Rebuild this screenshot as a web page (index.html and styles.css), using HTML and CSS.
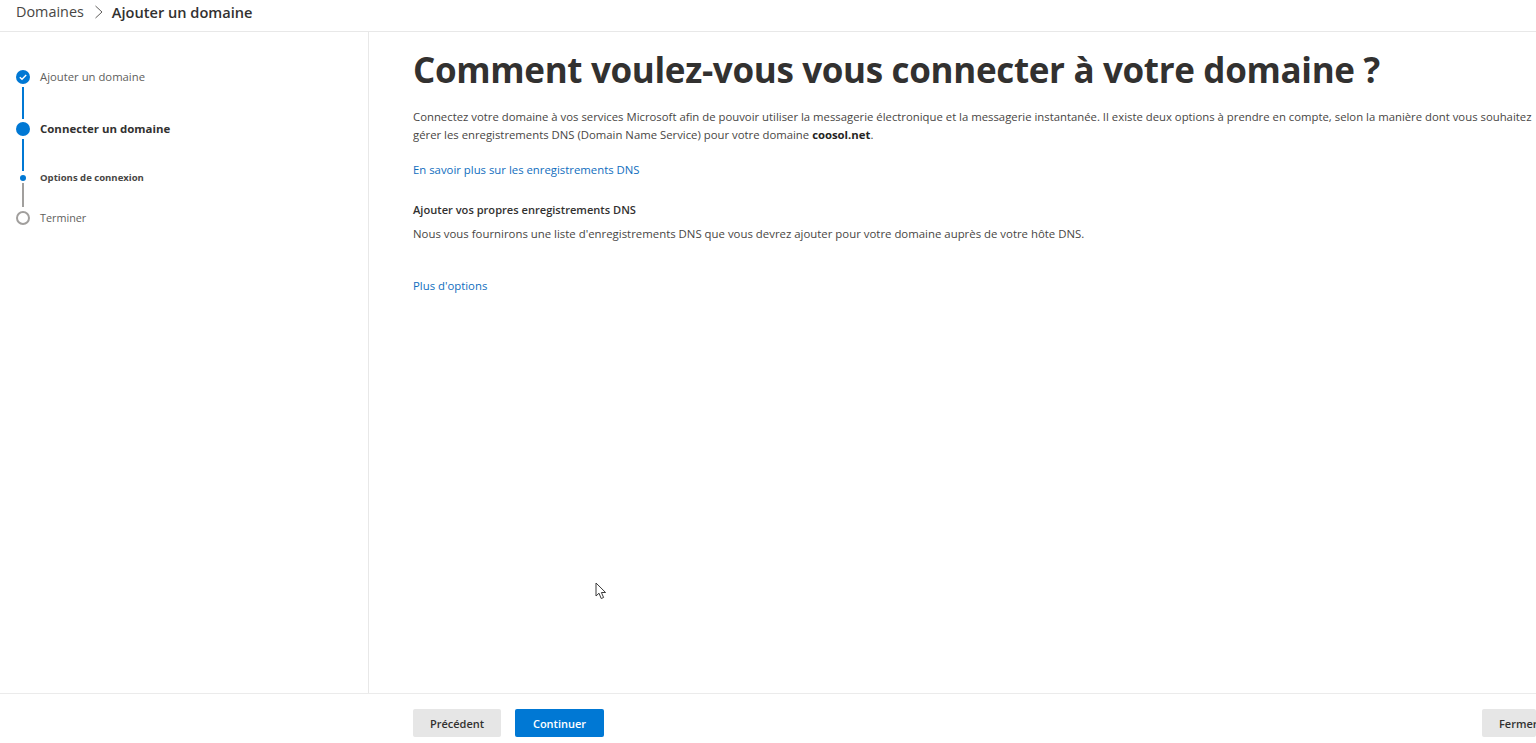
FILE: index.html
```html
<!DOCTYPE html>
<html lang="fr">
<head>
<meta charset="utf-8">
<title>Ajouter un domaine</title>
<link rel="stylesheet" href="styles.css">
</head>
<body>
<div class="page">
  <header class="crumbs">
    <span class="crumb">Domaines</span>
    <svg class="chev" width="10" height="14" viewBox="0 0 10 14"><path d="M1.5 1 L8 7 L1.5 13" fill="none" stroke="#605e5c" stroke-width="1"/></svg>
    <span class="crumb-current">Ajouter un domaine</span>
  </header>
  <div class="middle">
    <nav class="steps">
      <div class="step step-first">
        <div class="rail">
          <svg class="ico" width="14" height="14" viewBox="0 0 14 14"><circle cx="7" cy="7" r="7" fill="#0078d4"/><path d="M3.8 7.2 L6 9.2 L10.2 5" fill="none" stroke="#fff" stroke-width="1.4"/></svg>
          <div class="line line-blue h1"></div>
        </div>
        <span class="label label-main">Ajouter un domaine</span>
      </div>
      <div class="step">
        <div class="rail">
          <div class="dot-big"></div>
          <div class="line line-blue h1"></div>
        </div>
        <span class="label label-strong">Connecter un domaine</span>
      </div>
      <div class="step step-sub">
        <div class="rail">
          <div class="dot-small"></div>
          <div class="line line-grey h2"></div>
        </div>
        <span class="label label-sub">Options de connexion</span>
      </div>
      <div class="step">
        <div class="rail"><div class="ring"></div></div>
        <span class="label label-last">Terminer</span>
      </div>
    </nav>
    <main class="content">
      <h1>Comment voulez-vous vous connecter à votre domaine ?</h1>
      <p class="intro">Connectez votre domaine à vos services Microsoft afin de pouvoir utiliser la messagerie électronique et la messagerie instantanée. Il existe deux options à prendre en compte, selon la manière dont vous souhaitez gérer les enregistrements DNS (Domain Name Service) pour votre domaine <b>coosol.net</b>.</p>
      <a class="link link-learn" href="#">En savoir plus sur les enregistrements DNS</a>
      <h2>Ajouter vos propres enregistrements DNS</h2>
      <p class="desc">Nous vous fournirons une liste d'enregistrements DNS que vous devrez ajouter pour votre domaine auprès de votre hôte DNS.</p>
      <a class="link link-more" href="#">Plus d'options</a>
    </main>
  </div>
  <footer class="actions">
    <div class="actions-left">
      <button class="btn">Précédent</button>
      <button class="btn btn-primary">Continuer</button>
    </div>
    <button class="btn btn-close">Fermer</button>
  </footer>
  <svg class="cursor" width="13" height="18" viewBox="0 0 13 18"><path d="M1 1 V14 L4 11.2 L6.2 16.5 L8.6 15.5 L6.4 10.5 L10.6 10.5 Z" fill="#fff" stroke="#3a3a3a" stroke-width="1"/></svg>
</div>
</body>
</html>
```
FILE: styles.css
```css
* { box-sizing: border-box; }
html, body { margin: 0; padding: 0; height: 100%; overflow: hidden; background: #fff; }
body { font-family: "Open Sans", "Noto Sans", sans-serif; color: #323130; font-size: 11.4px; }
.page { position: relative; width: 1536px; height: 743px; display: flex; flex-direction: column; overflow: hidden; }
.crumbs { height: 32px; flex: none; border-bottom: 1px solid #e8e8e8; display: flex; align-items: center; padding: 0 0 8px 16px; }
.crumb { font-size: 14.4px; color: #484644; }
.chev { margin: 0 8px 0 10px; }
.crumb-current { font-size: 14.6px; font-weight: 600; color: #323130; }
.middle { flex: 1; display: flex; min-height: 0; }
.steps { width: 369px; flex: none; border-right: 1px solid #e8e8e8; padding: 38px 0 0 15.5px; }
.step { display: flex; align-items: flex-start; gap: 10.5px; }
.rail { width: 14px; display: flex; flex-direction: column; align-items: center; flex: none; }
.ico { display: block; flex: none; }
.line { width: 2px; margin-top: 3px; margin-bottom: 3px; }
.h1 { height: 32px; }
.h2 { height: 24px; margin-bottom: 4px; margin-top: 2px; }
.line-blue { background: #0078d4; }
.line-grey { background: #a19f9d; }
.dot-big { width: 14px; height: 14px; border-radius: 50%; background: #0078d4; flex: none; }
.dot-small { width: 6px; height: 6px; border-radius: 50%; background: #0078d4; margin-top: 1px; flex: none; }
.ring { width: 14px; height: 14px; border-radius: 50%; border: 2px solid #a19f9d; background: #fff; }
.label { font-size: 11.3px; line-height: 14px; color: #605e5c; white-space: nowrap; }
.label-last { font-size: 10.8px; }
.label-strong { font-size: 11.45px; font-weight: 700; color: #323130; }
.label-sub { font-size: 9.55px; line-height: 8px; font-weight: 700; color: #484644; }
.content { flex: 1; min-width: 0; padding: 15px 0 0 44px; overflow: hidden; }
h1 { margin: 0; font-size: 35px; letter-spacing: -0.34px; line-height: 46px; font-weight: 700; color: #323130; white-space: nowrap; }
.intro { margin: 15px 0 0; width: 1120px; font-size: 11.34px; line-height: 18px; color: #484644; }
.intro b { color: #252423; }
.link { display: block; color: #106ebe; text-decoration: none; font-size: 11.35px; line-height: 16px; }
.link-learn { margin-top: 18px; }
h2 { margin: 24px 0 0; font-size: 11.1px; line-height: 16px; font-weight: 600; color: #323130; }
.desc { margin: 8px 0 0; font-size: 11.4px; line-height: 16px; color: #484644; }
.link-more { margin-top: 36px; }
.actions { height: 50px; flex: none; border-top: 1px solid #ebebeb; display: flex; justify-content: space-between; padding: 15px 0 0 413px; position: relative; }
.actions-left { display: flex; gap: 14px; }
.btn { height: 28px; width: 88px; border: none; border-radius: 2px; background: #e6e6e6; color: #323130; font-family: inherit; font-size: 11px; font-weight: 600; padding: 0; }
.btn-primary { width: 89px; background: #0078d4; color: #fff; }
.btn-close { position: absolute; left: 1482px; top: 15px; width: 54px; text-align: left; padding-left: 17px; }
.cursor { position: absolute; left: 595px; top: 582px; }
```
